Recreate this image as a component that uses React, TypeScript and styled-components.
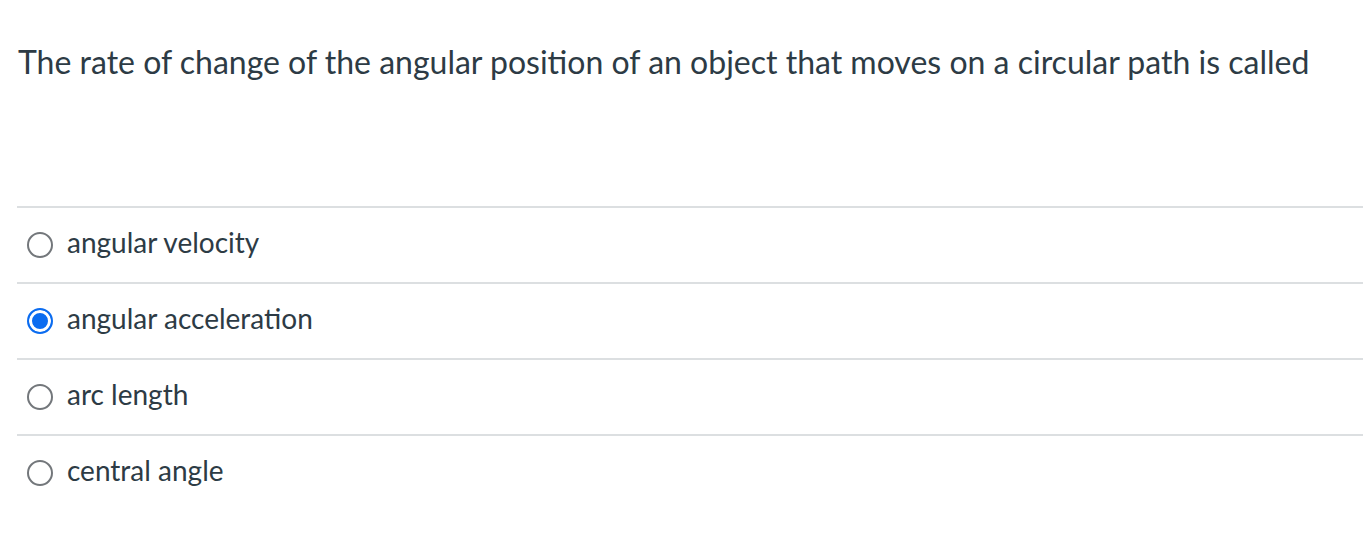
import React from 'react';
import styled, { createGlobalStyle } from 'styled-components';

const GlobalStyle = createGlobalStyle`
  html, body {
    margin: 0;
    padding: 0;
    background: #ffffff;
  }
  body {
    font-family: Lato, "Open Sans", sans-serif;
    color: #2d3b45;
  }
`;

const QuizQuestion = styled.div`
  padding: 40px 0 0 17px;
`;

const QuestionText = styled.p`
  margin: 0 0 0 1px;
  font-size: 32px;
  line-height: 44px;
  height: 166px;
`;

const AnswerList = styled.div`
  display: flex;
  flex-direction: column;
`;

const AnswerRow = styled.label`
  display: flex;
  align-items: center;
  gap: 14px;
  height: 76px;
  padding: 0 0 0 10px;
  border-top: 2px solid #dcdfe1;
  box-sizing: border-box;
  cursor: pointer;
`;

const Radio = styled.span<{ $checked?: boolean }>`
  width: 26px;
  height: 26px;
  border-radius: 50%;
  box-sizing: border-box;
  flex-shrink: 0;
  border: 2px solid ${(p) => (p.$checked ? '#0b6cf0' : '#73777b')};
  background: ${(p) => (p.$checked ? '#0b6cf0' : '#ffffff')};
  box-shadow: ${(p) => (p.$checked ? 'inset 0 0 0 3px #ffffff' : 'none')};
`;

const AnswerText = styled.span`
  font-size: 28px;
  line-height: 1;
  margin-top: -6px;
`;

const answers = [
  { text: 'angular velocity', checked: false },
  { text: 'angular acceleration', checked: true },
  { text: 'arc length', checked: false },
  { text: 'central angle', checked: false },
];

export default function App() {
  return (
    <>
      <GlobalStyle />
      <QuizQuestion>
        <QuestionText>
          The rate of change of the angular position of an object that moves on a circular path is called
        </QuestionText>
        <AnswerList>
          {answers.map((a) => (
            <AnswerRow key={a.text}>
              <Radio $checked={a.checked} />
              <AnswerText>{a.text}</AnswerText>
            </AnswerRow>
          ))}
        </AnswerList>
      </QuizQuestion>
    </>
  );
}
